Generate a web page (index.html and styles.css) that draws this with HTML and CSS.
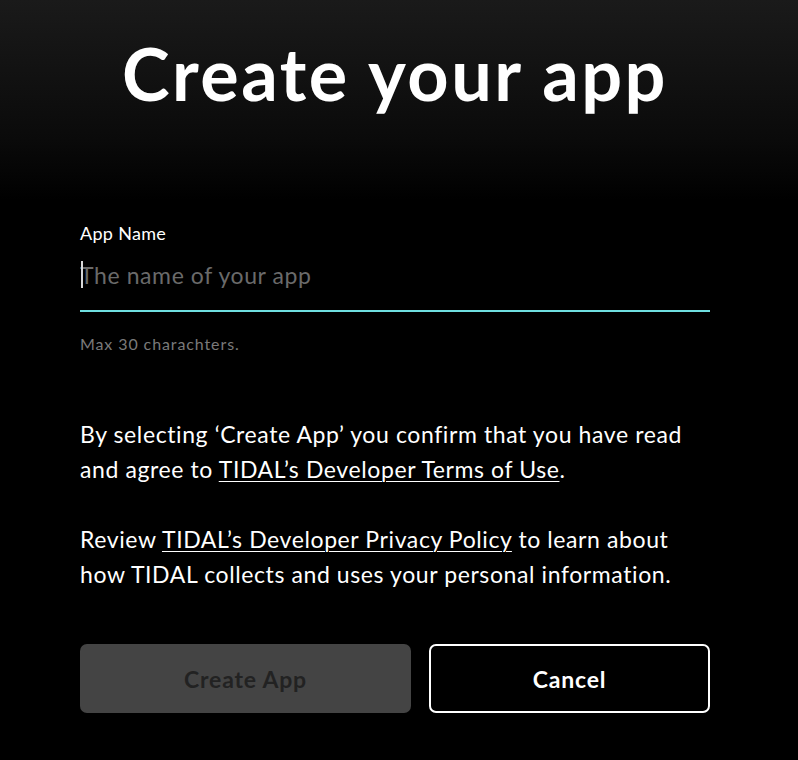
FILE: index.html
```html
<!DOCTYPE html>
<html lang="en">
<head>
<meta charset="utf-8">
<title>Create your app</title>
<link rel="stylesheet" href="styles.css">
</head>
<body>
<main class="page">
  <h1 class="title">Create your app</h1>
  <form class="form">
    <label class="label" for="appname">App Name</label>
    <div class="field">
      <span class="caret"></span>
      <input id="appname" class="input" type="text" placeholder="The name of your app">
    </div>
    <p class="hint">Max 30 charachters.</p>
    <p class="text">By selecting ‘Create App’ you confirm that you have read and agree to <a class="link" href="#">TIDAL’s Developer Terms of Use</a>.</p>
    <p class="text text-second">Review <a class="link" href="#">TIDAL’s Developer Privacy Policy</a> to learn about how TIDAL collects and uses your personal information.</p>
    <div class="actions">
      <button type="button" class="btn btn-create" disabled>Create App</button>
      <button type="button" class="btn btn-cancel">Cancel</button>
    </div>
  </form>
</main>
</body>
</html>
```

FILE: styles.css
```css
* { box-sizing: border-box; }
html, body { margin: 0; padding: 0; }
body {
  background: #000;
  font-family: "Lato", "Noto Sans", sans-serif;
  color: #fff;
  height: 760px;
  overflow: hidden;
}
.page {
  min-height: 760px;
  background: linear-gradient(180deg, #1a1a1a 0px, #0a0a0a 140px, #000 200px);
  padding: 0 88px 0 80px;
}
.title {
  margin: 0;
  padding-top: 28px;
  text-align: center;
  font-size: 72px;
  font-weight: 700;
  line-height: 90px;
  letter-spacing: 2.5px;
  color: #fff;
}
.form {
  display: flex;
  flex-direction: column;
  padding-top: 104px;
}
.label {
  font-size: 18px;
  line-height: 22px;
  letter-spacing: 0.3px;
  color: #fff;
}
.field {
  position: relative;
  margin-top: 14px;
  border-bottom: 2px solid #6fdfe0;
  height: 54px;
}
.caret {
  position: absolute;
  left: 1px;
  top: 3px;
  width: 2px;
  height: 27px;
  background: #d8d8d8;
}
.input {
  display: block;
  width: 100%;
  background: transparent;
  border: 0;
  outline: none;
  padding: 0;
  height: 34px;
  font-family: inherit;
  font-size: 23px;
  letter-spacing: 0.6px;
  color: #fff;
}
.input::placeholder { color: #6a6a6a; }
.hint {
  margin: 22px 0 0;
  font-size: 16px;
  line-height: 20px;
  letter-spacing: 0.9px;
  color: #7a7a7a;
}
.text {
  margin: 63px 0 0;
  font-size: 23px;
  line-height: 35px;
  letter-spacing: 0.6px;
  color: #fff;
}
.text-second { margin-top: 35px; }
.link {
  color: #fff;
  text-decoration: underline;
  text-underline-offset: 3px;
  text-decoration-thickness: 1px;
}
.actions {
  display: flex;
  gap: 18px;
  margin-top: 52px;
}
.btn {
  height: 69px;
  border-radius: 7px;
  font-family: inherit;
  font-size: 23px;
  font-weight: 700;
  letter-spacing: 0.8px;
}
.btn-create {
  flex: 0 0 331px;
  background: #444;
  border: 0;
  color: #222;
}
.btn-cancel {
  flex: 1 1 auto;
  background: #000;
  border: 2px solid #fff;
  color: #fff;
}
```
